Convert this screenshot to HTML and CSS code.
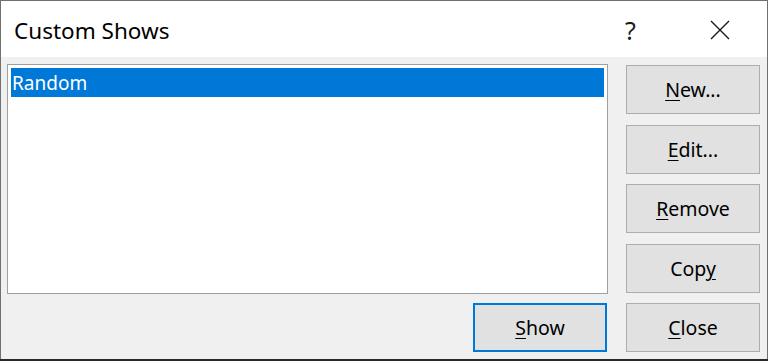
FILE: index.html
```html
<!DOCTYPE html>
<html>
<head>
<meta charset="utf-8">
<link rel="stylesheet" href="styles.css">
</head>
<body>
<div class="window">
  <div class="titlebar">
    <div class="title">Custom Shows</div>
    <div class="help">?</div>
    <div class="close-x">
      <svg width="20" height="20" viewBox="0 0 20 20"><path d="M1 1 L19 19 M19 1 L1 19" stroke="#1a1a1a" stroke-width="1.4" fill="none"/></svg>
    </div>
  </div>
  <div class="content">
    <div class="left">
      <div class="listbox">
        <div class="item selected">Random</div>
      </div>
      <div class="left-footer">
        <button class="btn default"><u>S</u>how</button>
      </div>
    </div>
    <div class="right">
      <button class="btn"><u>N</u>ew...</button>
      <button class="btn"><u>E</u>dit...</button>
      <button class="btn"><u>R</u>emove</button>
      <button class="btn">Cop<u>y</u></button>
      <button class="btn"><u>C</u>lose</button>
    </div>
  </div>
</div>
</body>
</html>
```
FILE: styles.css
```css
html, body {
  margin: 0;
  padding: 0;
}
body {
  width: 768px;
  height: 361px;
  background: #2b2530;
  font-family: "Noto Sans", "Open Sans", sans-serif;
  overflow: hidden;
}
.window {
  box-sizing: border-box;
  width: 768px;
  height: 359px;
  border: 1px solid #707070;
  border-bottom: none;
  background: #f0f0f0;
  display: flex;
  flex-direction: column;
}
.titlebar {
  height: 56px;
  background: #ffffff;
  display: flex;
  align-items: center;
  flex-shrink: 0;
}
.title {
  flex: 1;
  padding-left: 13px;
  font-size: 22.5px;
  color: #000;
  padding-top: 2px;
}
.help {
  font-size: 25px;
  color: #1a1a1a;
  width: 20px;
  margin-right: 65px;
  padding-top: 1px;
}
.close-x {
  width: 20px;
  height: 20px;
  margin-right: 37px;
  margin-top: 1px;
}
.close-x svg {
  display: block;
}
.content {
  flex: 1;
  display: flex;
  gap: 18px;
  padding: 7px 7px 7px 6px;
}
.left {
  flex: 1;
  display: flex;
  flex-direction: column;
  gap: 9px;
}
.listbox {
  flex: 1;
  background: #ffffff;
  border: 1px solid #a0a0a0;
  padding: 3px;
}
.item {
  height: 29px;
  line-height: 31px;
  font-size: 19px;
  padding-left: 1px;
}
.item.selected {
  background: #0078d7;
  color: #ffffff;
}
.left-footer {
  display: flex;
  justify-content: flex-end;
  padding-right: 1px;
}
.right {
  width: 134px;
  display: flex;
  flex-direction: column;
  justify-content: space-between;
  padding-top: 1px;
}
.btn {
  box-sizing: border-box;
  width: 134px;
  height: 49px;
  background: #e1e1e1;
  border: 1px solid #adadad;
  font-family: "Noto Sans", "Open Sans", sans-serif;
  font-size: 19.5px;
  color: #000;
  padding: 0;
  margin: 0;
}
.btn.default {
  border: 2px solid #0078d7;
}
.btn u {
  text-underline-offset: 3px;
  text-decoration-thickness: 1px;
}
```
